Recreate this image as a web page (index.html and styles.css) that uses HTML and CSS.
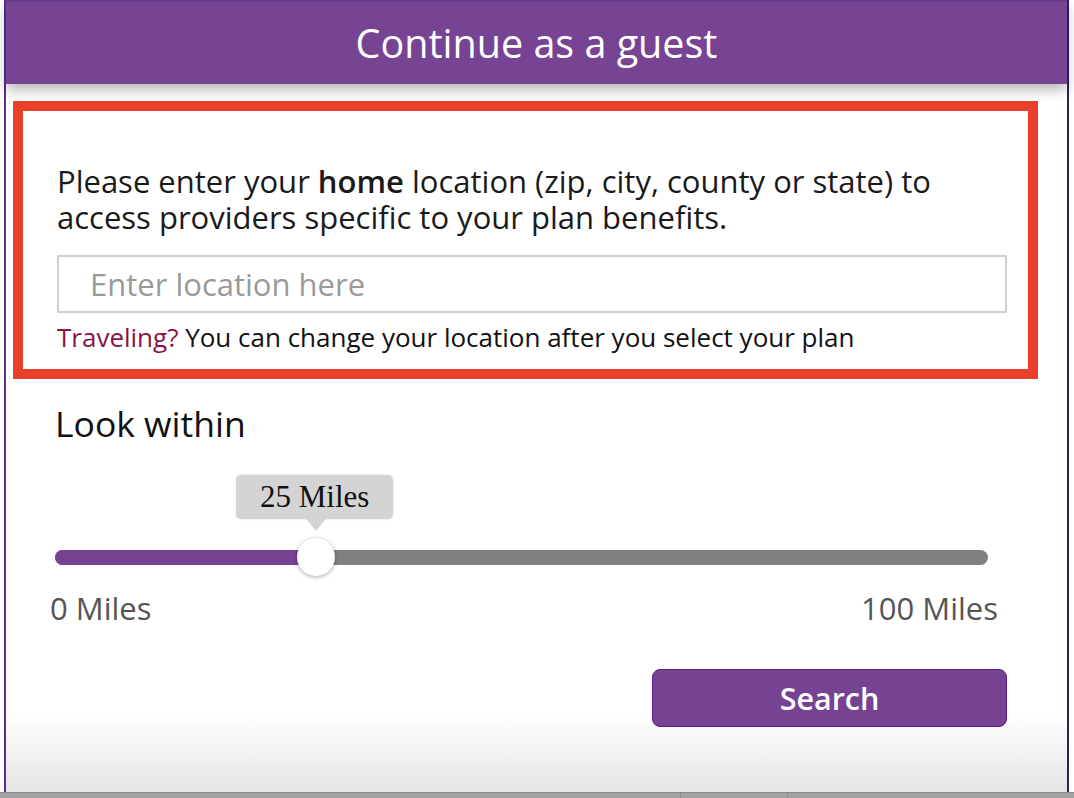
FILE: index.html
```html
<!DOCTYPE html>
<html lang="en">
<head>
  <meta charset="UTF-8" />
  <meta name="viewport" content="width=device-width, initial-scale=1.0"/>
  <title>Continue as a guest</title>
  <link rel="stylesheet" href="styles.css">
</head>
<body>

  <div class="modal">
    <div class="modal-header">
      <h2>Continue as a guest</h2>
    </div>

    <div class="modal-body">
      <div class="location">
        <p class="intro">Please enter your <b>home</b> location (zip, city, county or state) to access providers specific to your plan benefits.</p>
        <input type="text" class="location-input" placeholder="Enter location here" />
        <p class="hint"><span class="travel">Traveling?</span> You can change your location after you select your plan</p>
      </div>

      <div class="distance">
        <h3>Look within</h3>

        <div class="slider">
          <div class="track">
            <div class="fill" style="width: 28%"></div>
            <div class="thumb-spot">
              <span class="bubble">25 Miles</span>
              <span class="thumb"></span>
            </div>
          </div>
        </div>

        <div class="range-labels">
          <span>0 Miles</span>
          <span>100 Miles</span>
        </div>

        <div class="actions">
          <button class="search-btn">Search</button>
        </div>
      </div>
    </div>
  </div>

  <div class="page-strip">
    <span class="cell"></span>
    <span class="cell"></span>
    <span class="cell benefits">Benefits</span>
  </div>

</body>
</html>
```

FILE: styles.css
```css
body {
  font-family: "Open Sans", Arial, sans-serif;
  background: #fff;
  margin: 0;
  height: 798px;
  overflow: hidden;
}

.modal {
  margin: 0 5px 0 4px;
  height: 792px;
  border-left: 2px solid #5c2d91;
  border-right: 2px solid #2a1f6e;
  background: linear-gradient(#fff 0, #fff 715px, #e4e4e4 792px);
  box-sizing: border-box;
  display: flex;
  flex-direction: column;
}

.modal-header {
  background: #774393;
  border-top: 2px solid #6a3a8a;
  height: 82px;
  display: flex;
  align-items: center;
  justify-content: center;
  box-shadow: 0 6px 12px rgba(0,0,0,0.28);
  position: relative;
  z-index: 1;
}

.modal-header h2 {
  margin: 0;
  color: #fff;
  font-weight: 400;
  font-size: 39.5px;
  line-height: 50px;
}

.modal-body {
  padding: 17px 29px 0 7px;
}

.location {
  border: 10px solid #e8402b;
  padding: 52px 21px 16px 34px;
}

.intro {
  margin: 0 0 20px;
  font-size: 31px;
  line-height: 36px;
  color: #1a1a1a;
}

.intro b {
  font-weight: 600;
}

.location-input {
  display: block;
  width: 100%;
  height: 58px;
  box-sizing: border-box;
  border: 2px solid #cfcfcf;
  padding: 0 31px;
  font-family: "Open Sans", Arial, sans-serif;
  font-size: 31px;
  color: #222;
  outline: none;
}

.location-input::placeholder {
  color: #9a9a9a;
}

.hint {
  margin: 8px 0 0;
  font-size: 26px;
  line-height: 32px;
  color: #111;
}

.travel {
  color: #8c1247;
}

.distance {
  padding: 0 50px 0 42px;
}

.distance h3 {
  margin: 21px 0 0;
  font-size: 35.5px;
  line-height: 46px;
  font-weight: 400;
  color: #111;
}

.slider {
  margin-top: 104px;
}

.track {
  position: relative;
  display: flex;
  height: 15px;
  border-radius: 8px;
  background: #808080;
}

.fill {
  background: #764392;
  border-radius: 8px 0 0 8px;
}

.thumb-spot {
  position: relative;
  width: 0;
}

.thumb {
  position: absolute;
  left: -19px;
  top: -12px;
  width: 38px;
  height: 38px;
  border-radius: 50%;
  background: #fff;
  box-shadow: 0 1px 4px rgba(0,0,0,0.35);
}

.bubble {
  position: absolute;
  left: -80px;
  top: -75px;
  width: 157px;
  height: 44px;
  line-height: 44px;
  text-align: center;
  background: #d4d4d4;
  border-radius: 5px;
  box-shadow: 0 0 3px rgba(0,0,0,0.12);
  font-family: "Liberation Serif", "Times New Roman", serif;
  font-size: 31px;
  color: #111;
}

.bubble::after {
  content: "";
  position: absolute;
  left: 70px;
  bottom: -12px;
  border-left: 10px solid transparent;
  border-right: 10px solid transparent;
  border-top: 12px solid #d4d4d4;
}

.range-labels {
  display: flex;
  justify-content: space-between;
  margin: 23px -10px 0 -5px;
  font-size: 31px;
  line-height: 40px;
  color: #555;
}

.actions {
  display: flex;
  justify-content: flex-end;
  margin: 41px -19px 0 0;
}

.search-btn {
  width: 355px;
  height: 58px;
  background: #764392;
  border: 1px solid #5c1d8a;
  border-radius: 8px;
  color: #fff;
  font-family: "Open Sans", Arial, sans-serif;
  font-size: 30.5px;
  font-weight: 600;
  cursor: pointer;
}

.page-strip {
  display: flex;
  height: 6px;
  background: #a3a3a3;
  border-top: 1px solid #8a8a8a;
  overflow: hidden;
}

.cell {
  width: 106px;
  border-right: 1px solid #8e8e8e;
}

.cell:first-child {
  width: 680px;
}

.benefits {
  border: none;
  padding-left: 34px;
  font-size: 28px;
  line-height: 30px;
  color: #222;
}
```
